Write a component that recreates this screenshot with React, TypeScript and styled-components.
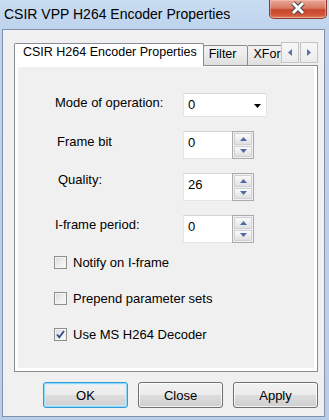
import styled, { createGlobalStyle } from 'styled-components';

const GlobalStyle = createGlobalStyle`
    html, body {
        margin: 0;
        padding: 0;
    }
    body {
        width: 329px;
        height: 420px;
        overflow: hidden;
        font-family: "Liberation Sans", Arial, sans-serif;
        font-size: 13px;
        color: #000;
    }
`

const Window = styled.div`
    width: 329px;
    height: 420px;
    box-sizing: border-box;
    display: flex;
    flex-direction: column;
    padding: 0 4px 3px 2px;
    background: linear-gradient(180deg, #c9dcf1 0%, #bed4ed 28px, #b8cee9 100%);
`

const TitleBar = styled.div`
    height: 29px;
    flex: none;
    display: flex;
    justify-content: space-between;
    align-items: flex-start;
`

const Title = styled.span`
    padding: 6px 0 0 2px;
    font-size: 14px;
    line-height: 16px;
    color: #000;
    white-space: nowrap;
`

const CloseButton = styled.div`
    width: 58px;
    height: 19px;
    margin-right: -2px;
    box-sizing: border-box;
    display: flex;
    justify-content: center;
    align-items: center;
    border: 1px solid #8a3a2e;
    border-top: none;
    border-radius: 0 0 5px 5px;
    background: linear-gradient(180deg, #e8a898 0%, #d97862 45%, #c8452c 55%, #d2573a 85%, #e08a6a 100%);
    box-shadow: inset 0 0 0 1px rgba(255, 210, 200, 0.45);
`

const Client = styled.div`
    flex: 1;
    display: flex;
    flex-direction: column;
    border: 1px solid #8193ab;
    background: #f0f0f0;
    padding: 13px 6px 8px 11px;
`

const TabStrip = styled.div`
    position: relative;
    z-index: 1;
    height: 23px;
    margin-bottom: -1px;
    display: flex;
    font-size: 12.5px;
`

const TabList = styled.div`
    flex: 1;
    min-width: 0;
    overflow: hidden;
    display: flex;
    align-items: flex-end;
`

const Tab = styled.div<{ $selected?: boolean }>`
    flex: none;
    box-sizing: border-box;
    line-height: 15px;
    white-space: nowrap;
    border: 1px solid #898c95;
    height: ${p => p.$selected ? '23px' : '21px'};
    padding: ${p => p.$selected ? '1px 6px 0 8px' : '1px 11px 0 5px'};
    margin-left: ${p => p.$selected ? '0' : '-1px'};
    border-bottom: ${p => p.$selected ? 'none' : '1px solid #898c95'};
    border-radius: 2px 2px 0 0;
    background: ${p => p.$selected
        ? '#ffffff'
        : 'linear-gradient(180deg, #f2f2f2 0%, #ebebeb 50%, #dedede 100%)'};
`

const ScrollArrows = styled.div`
    flex: none;
    align-self: flex-start;
    margin-top: -1px;
    display: flex;
    gap: 1px;
`

const ScrollArrow = styled.div`
    width: 18px;
    height: 21px;
    box-sizing: border-box;
    display: flex;
    justify-content: center;
    align-items: center;
    border: 1px solid #c2c4c8;
    background: linear-gradient(180deg, #f7f7f7 0%, #ececec 100%);
`

const Pane = styled.div`
    flex: 1;
    display: flex;
    border: 1px solid #898c95;
    background: #fff;
    padding: 1px 3px 3px 3px;
`

const Page = styled.div`
    flex: 1;
    display: flex;
    flex-direction: column;
    background: #f0f0f0;
    padding: 26px 0 0 36px;
`

const Fields = styled.div`
    display: flex;
    flex-direction: column;
    gap: 14px;
`

const FieldRow = styled.div`
    display: grid;
    grid-template-columns: 129px auto;
    align-items: start;
`

const FieldLabel = styled.span<{ $dx: number; $dy: number }>`
    line-height: 15px;
    white-space: nowrap;
    padding-left: ${p => p.$dx}px;
    margin-top: ${p => p.$dy}px;
`

const Combo = styled.div`
    width: 84px;
    height: 24px;
    box-sizing: border-box;
    display: flex;
    justify-content: space-between;
    align-items: flex-start;
    padding: 3px 5px 0 4px;
    line-height: 15px;
    background: #fff;
    border: 1px solid #e0e3e8;
    border-top-color: #d3d6dc;
    border-radius: 2px;
`

const ComboArrow = styled.svg`
    margin-top: 7px;
`

const SpinBox = styled.div`
    width: 71px;
    height: 28px;
    box-sizing: border-box;
    display: flex;
    background: #fff;
    border: 1px solid #e2e5eb;
    border-top-color: #cfd3da;
`

const SpinValue = styled.span`
    flex: 1;
    padding: 3px 0 0 4px;
    line-height: 15px;
`

const SpinButtons = styled.div`
    width: 22px;
    box-sizing: border-box;
    margin: -1px -1px -1px 0;
    display: flex;
    flex-direction: column;
    gap: 1px;
    padding: 1px;
    border: 1px solid #ababab;
    background: #f0f0f0;
`

const SpinButton = styled.div`
    flex: 1;
    display: flex;
    justify-content: center;
    align-items: center;
    border: 1px solid #cfd1d6;
    background: linear-gradient(180deg, #fafafa 0%, #eeeeee 50%, #dfdfdf 100%);
`

const Checks = styled.div`
    margin-top: 12px;
    display: flex;
    flex-direction: column;
    gap: 21px;
`

const CheckRow = styled.label`
    height: 15px;
    display: flex;
    align-items: center;
    gap: 6px;
    line-height: 15px;
    white-space: nowrap;
`

const CheckBox = styled.span`
    width: 13px;
    height: 13px;
    box-sizing: border-box;
    display: flex;
    justify-content: center;
    align-items: center;
    border: 1px solid #8e8f8f;
    background: linear-gradient(135deg, #d8d9db 0%, #eeeeef 55%, #fbfbfb 100%);
    box-shadow: inset 0 0 0 1px #f4f4f4;
`

const ButtonRow = styled.div`
    margin-top: 10px;
    display: flex;
    justify-content: flex-end;
    gap: 10px;
`

const ActionButton = styled.button<{ $default?: boolean }>`
    width: 85px;
    height: 26px;
    box-sizing: border-box;
    padding: 0;
    font-family: "Liberation Sans", Arial, sans-serif;
    font-size: 13px;
    color: #000;
    border-radius: 3px;
    border: 1px solid ${p => p.$default ? '#3399dd' : '#707070'};
    background: ${p => p.$default
        ? 'linear-gradient(180deg, #f2f2f2 0%, #ebebeb 50%, #dddddd 50%, #cfcfcf 100%)'
        : 'linear-gradient(180deg, #f2f2f2 0%, #ebebeb 50%, #dddddd 50%, #cfcfcf 100%)'};
    box-shadow: ${p => p.$default
        ? 'inset 0 0 0 1px #8fdcf9, inset 0 0 0 2px rgba(200, 240, 255, 0.6)'
        : 'inset 0 0 0 1px rgba(255, 255, 255, 0.75)'};
`

function UpArrow() {
    return (
        <svg width="7" height="4" viewBox="0 0 7 4">
            <path d="M0 4 L3.5 0 L7 4 Z" fill="#4f6aa6" />
        </svg>
    );
}

function DownArrow() {
    return (
        <svg width="7" height="4" viewBox="0 0 7 4">
            <path d="M0 0 L7 0 L3.5 4 Z" fill="#4f6aa6" />
        </svg>
    );
}

function Spin({ value }: { value: string }) {
    return (
        <SpinBox>
            <SpinValue>{value}</SpinValue>
            <SpinButtons>
                <SpinButton><UpArrow /></SpinButton>
                <SpinButton><DownArrow /></SpinButton>
            </SpinButtons>
        </SpinBox>
    );
}

function Check({ label, checked }: { label: string; checked?: boolean }) {
    return (
        <CheckRow>
            <CheckBox>
                {checked && (
                    <svg width="9" height="9" viewBox="0 0 9 9">
                        <path d="M1 4.5 L3.3 7.3 L8 1" stroke="#2f4a8a" strokeWidth="1.8" fill="none" />
                    </svg>
                )}
            </CheckBox>
            {label}
        </CheckRow>
    );
}

export default function App() {
    return (
        <>
            <GlobalStyle />
            <Window>
                <TitleBar>
                    <Title>CSIR VPP H264 Encoder Properties</Title>
                    <CloseButton>
                        <svg width="16" height="14" viewBox="0 0 16 14" style={{ marginTop: -2 }}>
                            <path d="M3 2 L13 12 M13 2 L3 12" stroke="#444" strokeWidth="5" fill="none" />
                            <path d="M3 2 L13 12 M13 2 L3 12" stroke="#fff" strokeWidth="3" fill="none" />
                        </svg>
                    </CloseButton>
                </TitleBar>

                <Client>
                    <TabStrip>
                        <TabList>
                            <Tab $selected>CSIR H264 Encoder Properties</Tab>
                            <Tab>Filter</Tab>
                            <Tab>XForm</Tab>
                        </TabList>
                        <ScrollArrows>
                            <ScrollArrow>
                                <svg width="4" height="7" viewBox="0 0 4 7">
                                    <path d="M4 0 L0 3.5 L4 7 Z" fill="#5a71a8" />
                                </svg>
                            </ScrollArrow>
                            <ScrollArrow>
                                <svg width="4" height="7" viewBox="0 0 4 7">
                                    <path d="M0 0 L4 3.5 L0 7 Z" fill="#5a71a8" />
                                </svg>
                            </ScrollArrow>
                        </ScrollArrows>
                    </TabStrip>

                    <Pane>
                        <Page>
                            <Fields>
                                <FieldRow>
                                    <FieldLabel $dx={1} $dy={2}>Mode of operation:</FieldLabel>
                                    <Combo>
                                        0
                                        <ComboArrow width="7" height="4" viewBox="0 0 7 4">
                                            <path d="M0 0 L7 0 L3.5 4 Z" fill="#000" />
                                        </ComboArrow>
                                    </Combo>
                                </FieldRow>
                                <FieldRow>
                                    <FieldLabel $dx={3} $dy={3}>Frame bit</FieldLabel>
                                    <Spin value="0" />
                                </FieldRow>
                                <FieldRow>
                                    <FieldLabel $dx={4} $dy={-1}>Quality:</FieldLabel>
                                    <Spin value="26" />
                                </FieldRow>
                                <FieldRow>
                                    <FieldLabel $dx={1} $dy={2}>I-frame period:</FieldLabel>
                                    <Spin value="0" />
                                </FieldRow>
                            </Fields>

                            <Checks>
                                <Check label="Notify on I-frame" />
                                <Check label="Prepend parameter sets" />
                                <Check label="Use MS H264 Decoder" checked />
                            </Checks>
                        </Page>
                    </Pane>

                    <ButtonRow>
                        <ActionButton $default>OK</ActionButton>
                        <ActionButton>Close</ActionButton>
                        <ActionButton>Apply</ActionButton>
                    </ButtonRow>
                </Client>
            </Window>
        </>
    );
}
